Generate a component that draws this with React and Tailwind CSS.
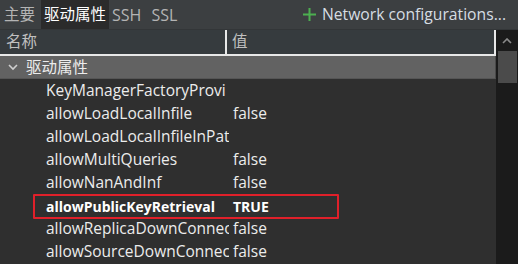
import React from "react";

const rows = [
  { name: "KeyManagerFactoryProvi", value: "" },
  { name: "allowLoadLocalInfile", value: "false" },
  { name: "allowLoadLocalInfileInPat", value: "" },
  { name: "allowMultiQueries", value: "false" },
  { name: "allowNanAndInf", value: "false" },
  { name: "allowPublicKeyRetrieval", value: "TRUE", bold: true },
  { name: "allowReplicaDownConnections", value: "false" },
  { name: "allowSourceDownConnections", value: "false" },
];

const font = { fontFamily: '"Open Sans", "Noto Sans CJK SC", sans-serif' };

export default function App() {
  return (
    <div className="w-[518px] h-[264px] overflow-hidden bg-[#2f2f2f] flex flex-col text-[15.5px]" style={font}>
      {/* Tab bar */}
      <div className="h-[30px] bg-[#3c3f41] flex items-stretch border-b border-[#333638] shrink-0">
        <div className="flex items-center pl-[4px] pr-[6px] text-[#b4b4b4] text-[15.5px]">主要</div>
        <div className="flex items-center px-[3px] bg-[#2b2b2b] text-white text-[15.5px]">驱动属性</div>
        <div className="flex items-center pl-[3px] pr-[7px] text-[#b4b4b4] text-[16px]">SSH</div>
        <div className="flex items-center px-[3px] text-[#b4b4b4] text-[16px]">SSL</div>
        <div className="flex-1" />
        <div className="flex items-center pr-[12px] text-[#d6dde3] text-[15.7px]">
          <svg width="13" height="13" viewBox="0 0 13 13" className="mr-[6px]">
            <rect x="5.5" y="0" width="2" height="13" fill="#4caf50" />
            <rect x="0" y="5.5" width="13" height="2" fill="#4caf50" />
          </svg>
          Network configurations...
        </div>
      </div>
      <div className="flex flex-1 min-h-0">
        <div className="flex-1 flex flex-col min-w-0">
          {/* Header */}
          <div className="h-[26px] bg-[#363b3e] flex shrink-0 border-b-2 border-r-2 border-[#e8e8e8]">
            <div className="w-[227px] border-r-2 border-[#e8e8e8] flex items-center pl-[6px] text-[#c0c0c0]">名称</div>
            <div className="flex items-center pl-[5px] text-[#c0c0c0]">值</div>
          </div>
          {/* Group row */}
          <div className="h-[23px] pt-px bg-[#626262] flex items-center border-b border-[#555555] border-r border-r-[#4a4a4a] shrink-0 text-[#ececec]">
            <svg width="10" height="7" viewBox="0 0 10 7" className="ml-[8px] mr-[8px]">
              <path d="M1 1 L5 5 L9 1" stroke="#cfcfcf" strokeWidth="1.6" fill="none" />
            </svg>
            <span>驱动属性</span>
          </div>
          {rows.map((r) => (
            <div key={r.name} className="h-[23px] pt-px flex items-center shrink-0 text-[#ececec] relative">
              <div className={`w-[229px] shrink-0 pl-[46px] overflow-hidden whitespace-nowrap ${r.bold ? "font-bold text-white text-[14px]" : ""}`}>
                {r.name}
              </div>
              <div className={`pl-[4px] whitespace-nowrap ${r.bold ? "font-bold text-white text-[14px]" : ""}`}>{r.value}</div>
              {r.bold && (
                <div className="absolute left-[33px] top-0 w-[306px] h-[25px] border-2 border-[#e0202a] rounded-[1px]" />
              )}
            </div>
          ))}
        </div>
        {/* Scrollbar */}
        <div className="w-[22px] bg-[#1b1b1b] flex flex-col items-center shrink-0">
          <div className="h-[21px] w-full flex items-center justify-center">
            <svg width="10" height="6" viewBox="0 0 10 6">
              <path d="M1 5 L5 1 L9 5" stroke="#8a8a8a" strokeWidth="1.6" fill="none" />
            </svg>
          </div>
          <div className="w-[19px] h-[32px] bg-[#4b4b4b]" />
        </div>
      </div>
    </div>
  );
}
